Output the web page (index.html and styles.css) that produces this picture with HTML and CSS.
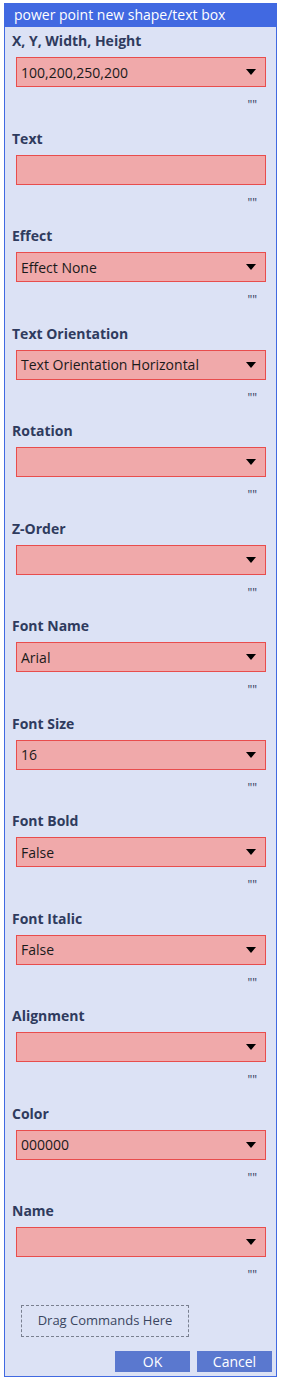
FILE: index.html
```html
<html>
  <head>
    <title>power point new shape/text box</title>
    <link rel="stylesheet" href="styles.css">
  </head>

  <body>
    <div class="panel">
      <div class="panel-title">power point new shape/text box</div>

      <div class="fields">
        <div class="field">
          <div class="field-label">X, Y, Width, Height</div>
          <div class="combo"><span>100,200,250,200</span><i class="arrow"></i></div>
          <div class="quote">""</div>
        </div>
        <div class="field">
          <div class="field-label">Text</div>
          <div class="combo"></div>
          <div class="quote">""</div>
        </div>
        <div class="field">
          <div class="field-label">Effect</div>
          <div class="combo"><span>Effect None</span><i class="arrow"></i></div>
          <div class="quote">""</div>
        </div>
        <div class="field">
          <div class="field-label">Text Orientation</div>
          <div class="combo"><span>Text Orientation Horizontal</span><i class="arrow"></i></div>
          <div class="quote">""</div>
        </div>
        <div class="field">
          <div class="field-label">Rotation</div>
          <div class="combo"><span></span><i class="arrow"></i></div>
          <div class="quote">""</div>
        </div>
        <div class="field">
          <div class="field-label">Z-Order</div>
          <div class="combo"><span></span><i class="arrow"></i></div>
          <div class="quote">""</div>
        </div>
        <div class="field">
          <div class="field-label">Font Name</div>
          <div class="combo"><span>Arial</span><i class="arrow"></i></div>
          <div class="quote">""</div>
        </div>
        <div class="field">
          <div class="field-label">Font Size</div>
          <div class="combo"><span>16</span><i class="arrow"></i></div>
          <div class="quote">""</div>
        </div>
        <div class="field">
          <div class="field-label">Font Bold</div>
          <div class="combo"><span>False</span><i class="arrow"></i></div>
          <div class="quote">""</div>
        </div>
        <div class="field">
          <div class="field-label">Font Italic</div>
          <div class="combo"><span>False</span><i class="arrow"></i></div>
          <div class="quote">""</div>
        </div>
        <div class="field">
          <div class="field-label">Alignment</div>
          <div class="combo"><span></span><i class="arrow"></i></div>
          <div class="quote">""</div>
        </div>
        <div class="field">
          <div class="field-label">Color</div>
          <div class="combo"><span>000000</span><i class="arrow"></i></div>
          <div class="quote">""</div>
        </div>
        <div class="field">
          <div class="field-label">Name</div>
          <div class="combo"><span></span><i class="arrow"></i></div>
          <div class="quote">""</div>
        </div>
      </div>

      <div class="drop-zone">Drag Commands Here</div>

      <div class="buttons">
        <div class="btn">OK</div>
        <div class="btn">Cancel</div>
      </div>
    </div>
  </body>
</html>
```

FILE: styles.css
```css
body {
  margin: 0;
  background: #ffffff;
  font-family: "Open Sans", "Noto Sans", sans-serif;
}

.panel {
  margin: 3px 0 0 4px;
  width: 271px;
  height: 1372px;
  border: 1px solid #4169e1;
  background: #dce2f5;
}

.panel-title {
  height: 23px;
  line-height: 21px;
  padding-left: 9px;
  background: #4169e1;
  color: #ffffff;
  font-size: 14px;
}

.fields {
  padding-top: 4px;
}

.field {
  height: 97.5px;
}

.field-label {
  height: 20px;
  line-height: 20px;
  padding-left: 7px;
  font-size: 14px;
  font-weight: bold;
  color: #2f3b5e;
}

.combo {
  display: flex;
  align-items: center;
  justify-content: space-between;
  margin: 6px 0 0 11px;
  width: 250px;
  height: 30px;
  box-sizing: border-box;
  padding: 0 9px 0 4px;
  background: #f0a9aa;
  border: 1px solid #e84d4d;
  font-size: 14px;
  color: #1a1a1a;
}

.arrow {
  width: 0;
  height: 0;
  border-left: 5px solid transparent;
  border-right: 5px solid transparent;
  border-top: 6px solid #000000;
}

.quote {
  margin-top: 8px;
  padding-right: 19px;
  text-align: right;
  font-size: 12px;
  line-height: 20px;
  color: #2f3b5e;
}

.drop-zone {
  margin: 6px 0 0 16px;
  width: 168px;
  height: 32px;
  box-sizing: border-box;
  border: 1px dashed #7a8090;
  text-align: center;
  line-height: 29px;
  font-size: 13px;
  color: #3a4560;
}

.buttons {
  display: flex;
  justify-content: flex-end;
  gap: 7px;
  margin: 14px 4px 0 0;
}

.btn {
  width: 75px;
  height: 21px;
  line-height: 21px;
  background: #5a78cf;
  color: #ffffff;
  text-align: center;
  font-size: 14px;
}
```
